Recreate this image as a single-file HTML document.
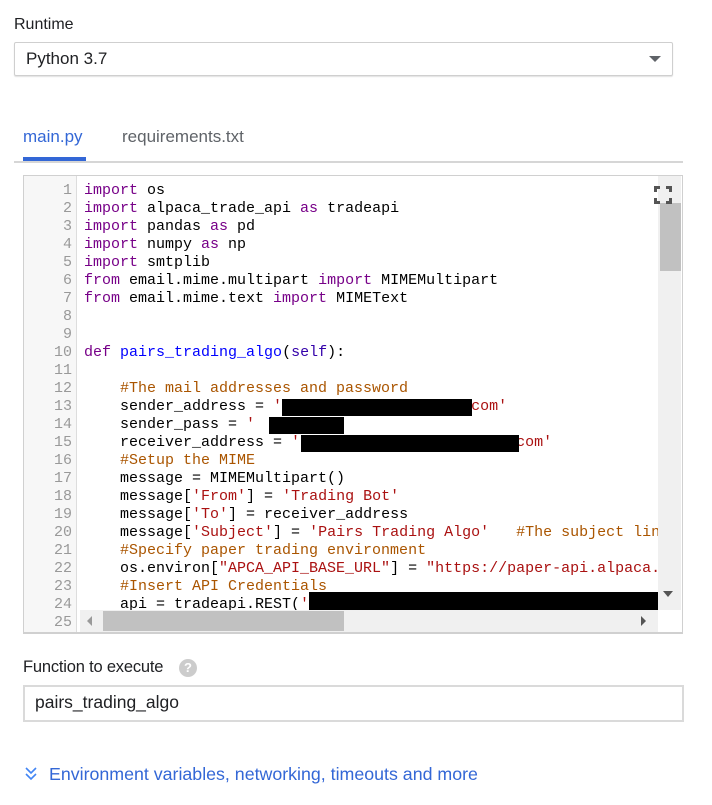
<!DOCTYPE html>
<html><head><meta charset="utf-8"><style>
body{margin:0;width:712px;height:805px;background:#fff;font-family:"Liberation Sans",Roboto,sans-serif;position:relative;overflow:hidden}
.a{position:absolute}
.lbl{font-size:16px;color:#202124}
.code{font-family:"Liberation Mono",monospace;font-size:15px;line-height:18px;white-space:pre;color:#000}
.k{color:#708}.s{color:#a11}.c{color:#a50}.d{color:#00f}.v{color:#30a}
.r{position:absolute;background:#000}
</style></head><body>
<div class="a lbl" style="left:14px;top:16px">Runtime</div>
<div class="a" style="left:14px;top:42px;width:657px;height:32px;border:1px solid #cfcfcf;border-radius:2px;box-shadow:0 1px 1px rgba(0,0,0,.12)"></div>
<div class="a" style="left:26px;top:49px;font-size:17px;color:#202124">Python 3.7</div>
<div class="a" style="left:649px;top:56px;width:0;height:0;border-left:6px solid transparent;border-right:6px solid transparent;border-top:6px solid #5f6368"></div>

<div class="a" style="left:23px;top:127px;font-size:17px;color:#3367d6">main.py</div>
<div class="a" style="left:122px;top:127px;font-size:17px;color:#5f6368">requirements.txt</div>
<div class="a" style="left:14px;top:161px;width:669px;height:2px;background:#d6d6d6"></div>
<div class="a" style="left:23px;top:157px;width:63px;height:4px;background:#3367d6"></div>

<div class="a" style="left:23px;top:175px;width:658px;height:456px;border:1px solid #d0d0d0;border-bottom-width:2px;overflow:hidden;background:#fff">
 <div class="a" style="left:0;top:0;width:52px;height:456px;background:#f7f7f7;border-right:1px solid #ddd"></div>
 <div class="a code" style="left:0;top:6px;width:48px;text-align:right;color:#999">1
2
3
4
5
6
7
8
9
10
11
12
13
14
15
16
17
18
19
20
21
22
23
24
25</div>
 <div class="a" style="left:60px;top:0;width:574px;height:456px;overflow:hidden">
 <div class="a code" style="left:0;top:6px"><span class="k">import</span> os
<span class="k">import</span> alpaca_trade_api <span class="k">as</span> tradeapi
<span class="k">import</span> pandas <span class="k">as</span> pd
<span class="k">import</span> numpy <span class="k">as</span> np
<span class="k">import</span> smtplib
<span class="k">from</span> email.mime.multipart <span class="k">import</span> MIMEMultipart
<span class="k">from</span> email.mime.text <span class="k">import</span> MIMEText


<span class="k">def</span> <span class="d">pairs_trading_algo</span>(<span class="v">self</span>):

    <span class="c">#The mail addresses and password</span>
    sender_address = <span class="s">'                     com'</span>
    sender_pass = <span class="s">'         </span>
    receiver_address = <span class="s">'                        com'</span>
    <span class="c">#Setup the MIME</span>
    message = MIMEMultipart()
    message[<span class="s">'From'</span>] = <span class="s">'Trading Bot'</span>
    message[<span class="s">'To'</span>] = receiver_address
    message[<span class="s">'Subject'</span>] = <span class="s">'Pairs Trading Algo'</span>   <span class="c">#The subject line</span>
    <span class="c">#Specify paper trading environment</span>
    os.environ[<span class="s">"APCA_API_BASE_URL"</span>] = <span class="s">"https://paper-api.alpaca.markets"</span>
    <span class="c">#Insert API Credentials</span>
    api = tradeapi.REST(<span class="s">'</span>
</div></div>
 <div class="r" style="left:258px;top:223px;width:190px;height:17px"></div>
 <div class="r" style="left:245px;top:241px;width:75px;height:17px"></div>
 <div class="r" style="left:277px;top:259px;width:218px;height:17px"></div>
 <div class="r" style="left:285px;top:416px;width:350px;height:18px"></div>
 <div class="a" style="left:634px;top:0;width:23px;height:434px;background:#f0f0f0"></div>
 <div class="a" style="left:636px;top:27px;width:21px;height:68px;background:#c1c1c1"></div>
 <div class="a" style="left:630px;top:10px;width:18px;height:18px;border:3px dashed #555;box-sizing:border-box"></div>
 <div class="a" style="left:639px;top:415px;border-left:5px solid transparent;border-right:5px solid transparent;border-top:6px solid #555"></div>
 <div class="a" style="left:56px;top:434px;width:578px;height:22px;background:#f0f0f0"></div>
 <div class="a" style="left:79px;top:435px;width:241px;height:20px;background:#c1c1c1"></div>
 <div class="a" style="left:63px;top:440px;border-top:5px solid transparent;border-bottom:5px solid transparent;border-right:5px solid #999"></div>
 <div class="a" style="left:617px;top:440px;border-top:5px solid transparent;border-bottom:5px solid transparent;border-left:5px solid #555"></div>
</div>

<div class="a lbl" style="left:23px;top:658px;font-size:16.5px;letter-spacing:-0.2px">Function to execute</div>
<div class="a" style="left:179px;top:659px;width:18px;height:18px;border-radius:50%;background:#ccc;color:#fff;font-size:13px;font-weight:bold;text-align:center;line-height:18px">?</div>
<div class="a" style="left:23px;top:685px;width:657px;height:33px;border:2px solid #dadada"></div>
<div class="a" style="left:35px;top:692px;font-size:17.5px;color:#202124">pairs_trading_algo</div>

<svg class="a" style="left:24px;top:766px" width="14" height="16" viewBox="0 0 14 16"><path d="M2 2l5 5 5-5M2 8l5 5 5-5" fill="none" stroke="#4285f4" stroke-width="1.6"/></svg>
<div class="a" style="left:49px;top:764px;font-size:17.8px;color:#3367d6">Environment variables, networking, timeouts and more</div>
</body></html>
